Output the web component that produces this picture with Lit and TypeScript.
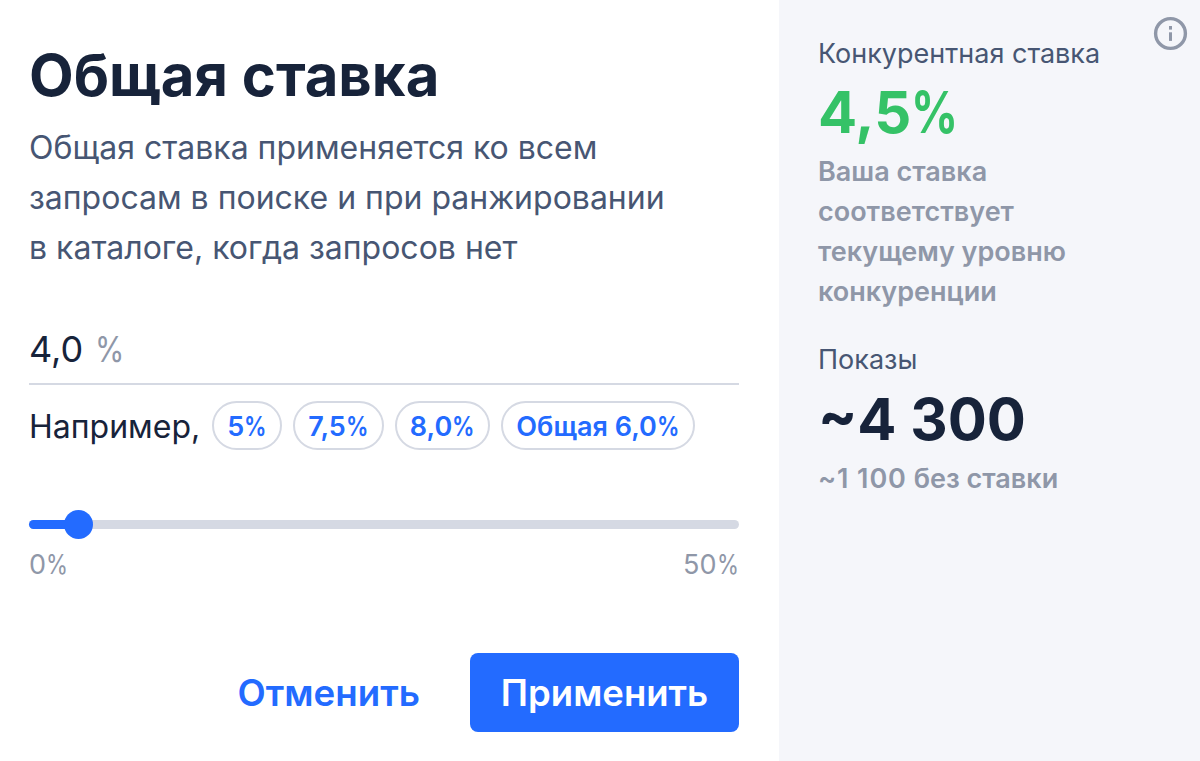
import { LitElement, html, css } from "lit";
import { customElement } from "lit/decorators.js";

const pct = html`<span class="pct">%</span>`;

@customElement("app-root")
export class AppRoot extends LitElement {
  static styles = css`
    :host { display: block; width: 1200px; height: 761px; overflow: hidden; font-family: Inter, "Liberation Sans", sans-serif; background: #fff; }
    * { box-sizing: border-box; }
    .page { display: flex; height: 761px; }
    .main { width: 779px; padding: 36px 40px 0 29px; display: flex; flex-direction: column; }
    .side { position: relative; flex: 1; background: #f5f6fa; padding: 36px 20px 0 39px; }
    .pct { display: inline-block; transform: scaleX(.83); transform-origin: left center; margin-right: -.15em; }
    h1 { margin: 0; font-size: 58px; line-height: 78px; font-weight: 700; color: #17233a; }
    .desc { margin: 9px 0 0; font-size: 32px; line-height: 50px; color: #475673; }
    .input { margin-top: 47px; height: 65px; display: flex; align-items: center; gap: 12px; border-bottom: 2px solid #d5d9e3; font-size: 36px; color: #17233a; padding-bottom: 6px; }
    .input .unit { color: #8f97a8; }
    .examples { margin-top: 16px; display: flex; align-items: center; gap: 11px; }
    .examples .lbl { font-size: 32px; color: #17233a; margin-right: 1px; padding-top: 2px; }
    .chip { height: 49px; padding: 1px 13px 0; border: 2px solid #d5d9e3; border-radius: 25px; display: flex; align-items: center; font-size: 27px; font-weight: 600; color: #236bff; }
    .track { position: relative; margin-top: 70px; height: 9px; border-radius: 5px; background: #d5d9e3; }
    .fill { position: absolute; left: 0; top: 0; height: 9px; width: 49px; border-radius: 5px; background: #236bff; }
    .thumb { position: absolute; left: 35px; top: -10px; width: 29px; height: 29px; border-radius: 50%; background: #236bff; }
    .scale { margin-top: 18px; display: flex; justify-content: space-between; font-size: 27px; line-height: 36px; color: #8f97a8; }
    .actions { margin-top: 70px; display: flex; justify-content: flex-end; align-items: center; gap: 50px; }
    .cancel { font-size: 36.7px; font-weight: 600; color: #236bff; }
    .apply { width: 269px; height: 79px; border-radius: 8px; background: #236bff; color: #fff; font-size: 36.5px; font-weight: 600; display: flex; align-items: center; justify-content: center; }
    .info { position: absolute; right: 12px; top: 16px; width: 35px; height: 35px; }
    .t1 { font-size: 27px; line-height: 36px; color: #475673; }
    .big { font-size: 58px; line-height: 72px; font-weight: 700; }
    .green { color: #35c267; margin-top: 4px; }
    .green .pct { transform: scaleX(.8); }
    .note { font-size: 27px; line-height: 40px; font-weight: 600; color: #8f97a8; }
    .green + .note { margin-top: 4px; }
    .dark { color: #17233a; margin-top: 5px; }
    .shows { margin-top: 30px; }
    .last { margin-top: 4px; }
    .wide { letter-spacing: .9px; }
  `;
  render() {
    return html`<div class="page">
      <div class="main">
        <h1>Общая ставка</h1>
        <p class="desc">Общая ставка применяется ко всем<br>запросам в поиске и при ранжировании<br>в каталоге, когда запросов нет</p>
        <div class="input"><div>4,0</div><div class="unit">${pct}</div></div>
        <div class="examples"><div class="lbl">Например,</div>
          <div class="chip"><div>5${pct}</div></div><div class="chip"><div>7,5${pct}</div></div><div class="chip"><div>8,0${pct}</div></div><div class="chip"><div>Общая 6,0${pct}</div></div></div>
        <div class="track"><div class="fill"></div><div class="thumb"></div></div>
        <div class="scale"><div>0${pct}</div><div>50${pct}</div></div>
        <div class="actions"><div class="cancel">Отменить</div><div class="apply">Применить</div></div>
      </div>
      <div class="side">
        <svg class="info" viewBox="0 0 35 35" fill="none"><circle cx="17.5" cy="17.5" r="14.9" stroke="#8f97a8" stroke-width="3.4"/><rect x="16" y="16.3" width="3" height="8.6" fill="#8f97a8"/><rect x="16" y="10" width="3" height="3.6" fill="#8f97a8"/></svg>
        <div class="t1">Конкурентная ставка</div>
        <div class="big green">4,5${pct}</div>
        <div class="note">Ваша ставка<br>соответствует<br>текущему уровню<br>конкуренции</div>
        <div class="t1 shows">Показы</div>
        <div class="big dark">~4 300</div>
        <div class="note last"><span class="wide">~1 100</span> без ставки</div>
      </div>
    </div>`;
  }
}
